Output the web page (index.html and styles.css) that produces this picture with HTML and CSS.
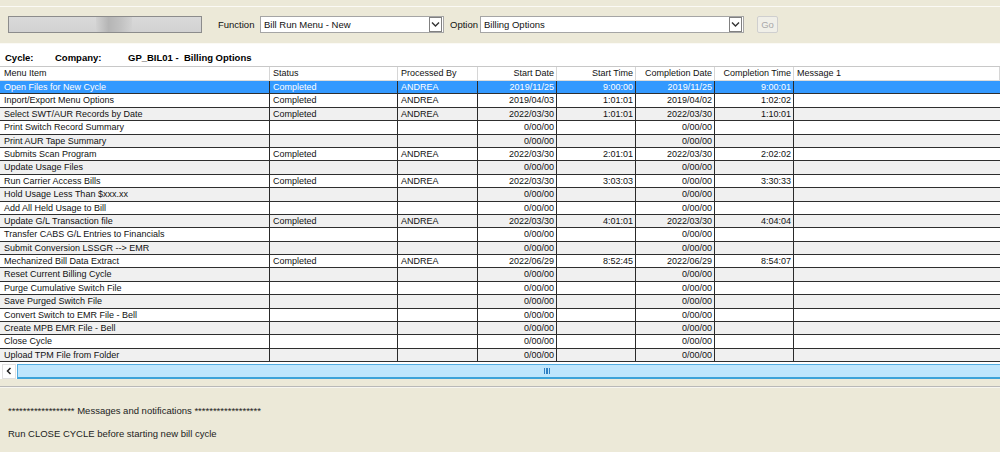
FILE: index.html
```html
<!DOCTYPE html>
<html>
<head>
<meta charset="utf-8">
<link rel="stylesheet" href="styles.css">
</head>
<body>
<div class="top">
  <div class="toolbar">
    <div class="progress"><div class="blob"></div></div>
    <span class="lbl lbl-func">Function</span>
    <div class="select sel1"><span class="val">Bill Run Menu - New</span><span class="arrow"><svg width="9" height="7" viewBox="0 0 9 7"><path d="M1 1.5 L4.5 5 L8 1.5" fill="none" stroke="#333" stroke-width="1.4"/></svg></span></div>
    <span class="lbl lbl-opt">Option</span>
    <div class="select sel2"><span class="val">Billing Options</span><span class="arrow"><svg width="9" height="7" viewBox="0 0 9 7"><path d="M1 1.5 L4.5 5 L8 1.5" fill="none" stroke="#333" stroke-width="1.4"/></svg></span></div>
    <button class="go" disabled>Go</button>
  </div>
</div>
<div class="info">
  <div class="info-line"><span class="k1">Cycle:</span><span class="k2">Company:</span><span class="k3">GP_BIL01 -&nbsp; Billing Options</span></div>
</div>
<div class="grid">
  <div class="row head"><div>Menu Item</div><div>Status</div><div>Processed By</div><div class="r">Start Date</div><div class="r">Start Time</div><div class="r">Completion Date</div><div class="r">Completion Time</div><div>Message 1</div></div>
  <div class="row sel"><div>Open Files for New Cycle</div><div>Completed</div><div>ANDREA</div><div class="r">2019/11/25</div><div class="r">9:00:00</div><div class="r">2019/11/25</div><div class="r">9:00:01</div><div></div></div>
  <div class="row"><div>Inport/Export Menu Options</div><div>Completed</div><div>ANDREA</div><div class="r">2019/04/03</div><div class="r">1:01:01</div><div class="r">2019/04/02</div><div class="r">1:02:02</div><div></div></div>
  <div class="row alt"><div>Select SWT/AUR Records by Date</div><div>Completed</div><div>ANDREA</div><div class="r">2022/03/30</div><div class="r">1:01:01</div><div class="r">2022/03/30</div><div class="r">1:10:01</div><div></div></div>
  <div class="row"><div>Print Switch Record Summary</div><div></div><div></div><div class="r">0/00/00</div><div class="r"></div><div class="r">0/00/00</div><div class="r"></div><div></div></div>
  <div class="row alt"><div>Print AUR Tape Summary</div><div></div><div></div><div class="r">0/00/00</div><div class="r"></div><div class="r">0/00/00</div><div class="r"></div><div></div></div>
  <div class="row"><div>Submits Scan Program</div><div>Completed</div><div>ANDREA</div><div class="r">2022/03/30</div><div class="r">2:01:01</div><div class="r">2022/03/30</div><div class="r">2:02:02</div><div></div></div>
  <div class="row alt"><div>Update Usage Files</div><div></div><div></div><div class="r">0/00/00</div><div class="r"></div><div class="r">0/00/00</div><div class="r"></div><div></div></div>
  <div class="row"><div>Run Carrier Access Bills</div><div>Completed</div><div>ANDREA</div><div class="r">2022/03/30</div><div class="r">3:03:03</div><div class="r">0/00/00</div><div class="r">3:30:33</div><div></div></div>
  <div class="row alt"><div>Hold Usage Less Than $xxx.xx</div><div></div><div></div><div class="r">0/00/00</div><div class="r"></div><div class="r">0/00/00</div><div class="r"></div><div></div></div>
  <div class="row"><div>Add All Held Usage to Bill</div><div></div><div></div><div class="r">0/00/00</div><div class="r"></div><div class="r">0/00/00</div><div class="r"></div><div></div></div>
  <div class="row alt"><div>Update G/L Transaction file</div><div>Completed</div><div>ANDREA</div><div class="r">2022/03/30</div><div class="r">4:01:01</div><div class="r">2022/03/30</div><div class="r">4:04:04</div><div></div></div>
  <div class="row"><div>Transfer CABS G/L Entries to Financials</div><div></div><div></div><div class="r">0/00/00</div><div class="r"></div><div class="r">0/00/00</div><div class="r"></div><div></div></div>
  <div class="row alt"><div>Submit Conversion LSSGR --&gt; EMR</div><div></div><div></div><div class="r">0/00/00</div><div class="r"></div><div class="r">0/00/00</div><div class="r"></div><div></div></div>
  <div class="row"><div>Mechanized Bill Data Extract</div><div>Completed</div><div>ANDREA</div><div class="r">2022/06/29</div><div class="r">8:52:45</div><div class="r">2022/06/29</div><div class="r">8:54:07</div><div></div></div>
  <div class="row alt"><div>Reset Current Billing Cycle</div><div></div><div></div><div class="r">0/00/00</div><div class="r"></div><div class="r">0/00/00</div><div class="r"></div><div></div></div>
  <div class="row"><div>Purge Cumulative Switch File</div><div></div><div></div><div class="r">0/00/00</div><div class="r"></div><div class="r">0/00/00</div><div class="r"></div><div></div></div>
  <div class="row alt"><div>Save Purged Switch File</div><div></div><div></div><div class="r">0/00/00</div><div class="r"></div><div class="r">0/00/00</div><div class="r"></div><div></div></div>
  <div class="row"><div>Convert Switch to EMR File - Bell</div><div></div><div></div><div class="r">0/00/00</div><div class="r"></div><div class="r">0/00/00</div><div class="r"></div><div></div></div>
  <div class="row alt"><div>Create MPB EMR File - Bell</div><div></div><div></div><div class="r">0/00/00</div><div class="r"></div><div class="r">0/00/00</div><div class="r"></div><div></div></div>
  <div class="row"><div>Close Cycle</div><div></div><div></div><div class="r">0/00/00</div><div class="r"></div><div class="r">0/00/00</div><div class="r"></div><div></div></div>
  <div class="row alt"><div>Upload TPM File from Folder</div><div></div><div></div><div class="r">0/00/00</div><div class="r"></div><div class="r">0/00/00</div><div class="r"></div><div></div></div>
</div>
<div class="hscroll">
  <div class="sbtn"><svg width="6" height="8" viewBox="0 0 6 8"><path d="M4.5 1 L1.5 4 L4.5 7" fill="none" stroke="#222" stroke-width="1.5"/></svg></div>
  <div class="track"><span class="grip"><i></i><i></i><i></i></span></div>
</div>
<div class="messages">
  <p>****************** Messages and notifications ******************</p>
  <p>Run CLOSE CYCLE before starting new bill cycle</p>
</div>
</body>
</html>
```
FILE: styles.css
```css
html, body {
  margin: 0;
  padding: 0;
  background: #ffffff;
}
body {
  width: 1000px;
  height: 452px;
  overflow: hidden;
  font-family: "Liberation Sans", Arial, sans-serif;
  font-size: 9px;
  color: #111;
}
.top {
  background: #ece9d8;
  padding-top: 6px;
}
.toolbar {
  border-top: 1px solid #fbfaf5;
  border-bottom: 1px solid #fbfaf5;
  height: 17px;
  padding: 9px 0 10px 8px;
  display: flex;
  align-items: center;
}
.progress {
  width: 192px;
  height: 15px;
  border: 1px solid #8c8c8c;
  background: linear-gradient(#d9d9d9, #d2d2d2);
  position: relative;
}
.progress .blob {
  position: absolute;
  left: 87px;
  top: 0;
  width: 36px;
  height: 15px;
  background: linear-gradient(90deg, #d2d2d2, #b5b5b5 35%, #c2c2c2 70%, #d2d2d2);
}
.lbl {
  font-size: 9.5px;
  color: #111;
}
.lbl-func {
  margin-left: 16px;
  width: 42px;
}
.lbl-opt {
  margin-left: 6px;
  width: 30px;
}
.select {
  height: 15px;
  border: 1px solid #a5a5a5;
  background: #fff;
  display: flex;
  align-items: center;
  justify-content: space-between;
  box-sizing: content-box;
}
.select .val {
  padding-left: 3px;
  font-size: 9.5px;
}
.sel1 { width: 182px; }
.sel2 { width: 262px; }
.arrow {
  width: 11px;
  height: 13px;
  margin-right: 1px;
  border: 1px solid #808080;
  display: flex;
  align-items: center;
  justify-content: center;
  background: #fff;
}
.go {
  margin-left: 13px;
  width: 21px;
  height: 17px;
  padding: 0;
  border: 1px solid #cfcfcf;
  border-radius: 2px;
  background: #f0efe8;
  color: #a8a8a8;
  font-family: "Liberation Sans", Arial, sans-serif;
  font-size: 9.5px;
}
.info {
  height: 22px;
  overflow: hidden;
  box-sizing: border-box;
  padding-top: 8px;
}
.info-line {
  display: flex;
  height: 11px;
  line-height: 11px;
  font-weight: bold;
  font-size: 9.5px;
  color: #000;
}
.k1 { width: 50px; padding-left: 5px; }
.k2 { width: 73px; }
.grid {
  width: 1000px;
}
.row {
  display: grid;
  grid-template-columns: 270px 128px 80px 79px 79px 79px 79px 1fr;
  height: 13.4px;
  box-sizing: border-box;
  border-bottom: 1px solid #2e2e2e;
  background: #fff;
}
.row.alt { background: #f0f0f0; }
.row > div {
  border-right: 1px solid #2a2a2a;
  padding: 0 2px 0 3px;
  line-height: 12.4px;
  white-space: nowrap;
  overflow: hidden;
}
.row > div:first-child { padding-left: 4px; }
.row > div:last-child { border-right: none; }
.row > div.r { text-align: right; }
.row.head {
  height: 15px;
  border-top: 1px solid #c8c8c8;
  border-bottom: 1px solid #dcdcdc;
  background: #fff;
}
.row.head > div {
  border-right: 1px solid #d6d6d6;
  line-height: 13px;
  color: #111;
}
.row.sel {
  background: #3399ff;
  color: #fff;
}
.hscroll {
  margin-top: 1.6px;
  height: 15px;
  display: flex;
  padding-left: 2px;
  background: #fff;
}
.sbtn {
  width: 12px;
  height: 13px;
  border: 1px solid #e0e0e0;
  background: #fff;
  display: flex;
  align-items: center;
  justify-content: center;
}
.track {
  flex: 1;
  margin-left: 1px;
  box-sizing: border-box;
  height: 15px;
  background: #bee6fd;
  border-top: 1px solid #52ace0;
  border-bottom: 2px solid #3ca3d9;
  border-left: 1px solid #52ace0;
  display: flex;
  align-items: center;
  justify-content: center;
}
.grip {
  display: flex;
  gap: 1px;
  margin-left: 76px;
}
.grip i {
  display: block;
  width: 1.5px;
  height: 6px;
  background: #2d7fc3;
}
.messages {
  background: #ece9d8;
  height: 80px;
  box-sizing: border-box;
  padding-top: 7px;
}
.messages::before {
  content: "";
  display: block;
  height: 1px;
  background: #b9b9b9;
  border-bottom: 1px solid #f7f6f0;
}
.messages p {
  margin: 0;
  padding-left: 8px;
  font-size: 9.5px;
  color: #222;
  line-height: 11px;
}
.messages p:first-of-type { margin-top: 17px; }
.messages p + p { margin-top: 12px; }
```
